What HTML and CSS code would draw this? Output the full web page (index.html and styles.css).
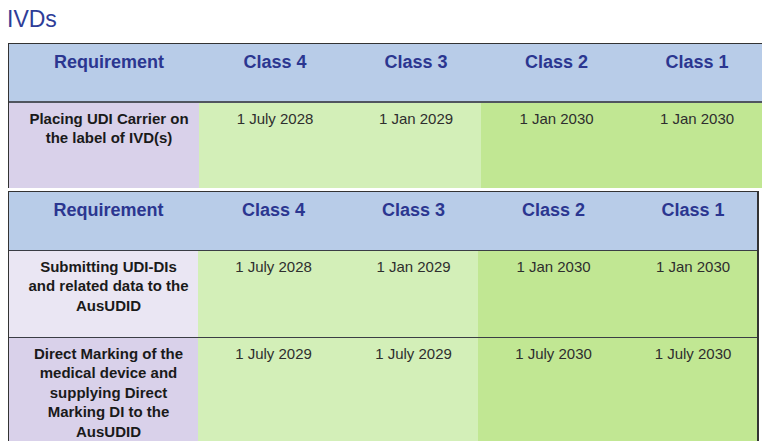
FILE: index.html
```html
<!DOCTYPE html>
<html lang="en">
<head>
<meta charset="utf-8">
<title>IVDs</title>
<link rel="stylesheet" href="styles.css">
</head>
<body>
<h1 class="title">IVDs</h1>
<div class="grid grid-a">
  <div class="cell head">Requirement</div>
  <div class="cell head">Class 4</div>
  <div class="cell head">Class 3</div>
  <div class="cell head">Class 2</div>
  <div class="cell head">Class 1</div>
  <div class="cell req req-dark">Placing UDI Carrier on<br>the label of IVD(s)</div>
  <div class="cell date light">1 July 2028</div>
  <div class="cell date light">1 Jan 2029</div>
  <div class="cell date dark">1 Jan 2030</div>
  <div class="cell date dark">1 Jan 2030</div>
</div>
<div class="grid grid-b">
  <div class="cell head">Requirement</div>
  <div class="cell head">Class 4</div>
  <div class="cell head">Class 3</div>
  <div class="cell head">Class 2</div>
  <div class="cell head">Class 1</div>
  <div class="cell req req-light sep">Submitting UDI-DIs<br>and related data to the<br>AusUDID</div>
  <div class="cell date light sep">1 July 2028</div>
  <div class="cell date light sep">1 Jan 2029</div>
  <div class="cell date dark sep">1 Jan 2030</div>
  <div class="cell date dark sep">1 Jan 2030</div>
  <div class="cell req req-dark">Direct Marking of the<br>medical device and<br>supplying Direct<br>Marking DI to the<br>AusUDID</div>
  <div class="cell date light">1 July 2029</div>
  <div class="cell date light">1 July 2029</div>
  <div class="cell date dark">1 July 2030</div>
  <div class="cell date dark">1 July 2030</div>
</div>
</body>
</html>
```
FILE: styles.css
```css
* { box-sizing: border-box; }
html, body { margin: 0; padding: 0; background: #ffffff; }
body {
  font-family: "Liberation Sans", Arial, sans-serif;
  overflow: hidden;
}
.title {
  margin: 0;
  padding: 5px 0 0 7px;
  height: 32px;
  font-size: 23px;
  line-height: 28px;
  font-weight: normal;
  color: #2e3d98;
}
.grid {
  display: grid;
  margin-left: 8px;
  border-top: 1px solid #333333;
  border-left: 1px solid #333333;
}
.grid-a {
  margin-top: 11px;
  width: 754px;
  grid-template-columns: 190px 142px 140px 141px 140px;
  grid-template-rows: 59px 85px;
}
.grid-b {
  margin-top: 3px;
  width: 751px;
  border-right: 2px solid #333333;
  grid-template-columns: 189px 141px 139px 141px 138px;
  grid-template-rows: 59px 87px 110px;
}
.cell {
  text-align: center;
  padding: 6px 0 0 10px;
}
.head {
  background: #b8cce8;
  color: #2b3690;
  font-weight: bold;
  font-size: 18px;
  line-height: 21px;
  padding-top: 8px;
}
.grid-a .head { border-bottom: 2px solid #50555f; }
.grid-b .head { border-bottom: 1px solid #3a3d44; }
.sep { border-bottom: 1px solid #3a3d44; }
.req {
  font-weight: bold;
  font-size: 15px;
  line-height: 19.4px;
  color: #1a1a1a;
  padding-top: 6px;
}
.req-dark { background: #d9d1ea; }
.req-light { background: #eae6f3; }
.date {
  font-size: 15px;
  line-height: 19.4px;
  color: #2e2e2e;
  padding-top: 6px;
}
.light { background: #d3efb8; }
.dark { background: #c1e793; }
```
